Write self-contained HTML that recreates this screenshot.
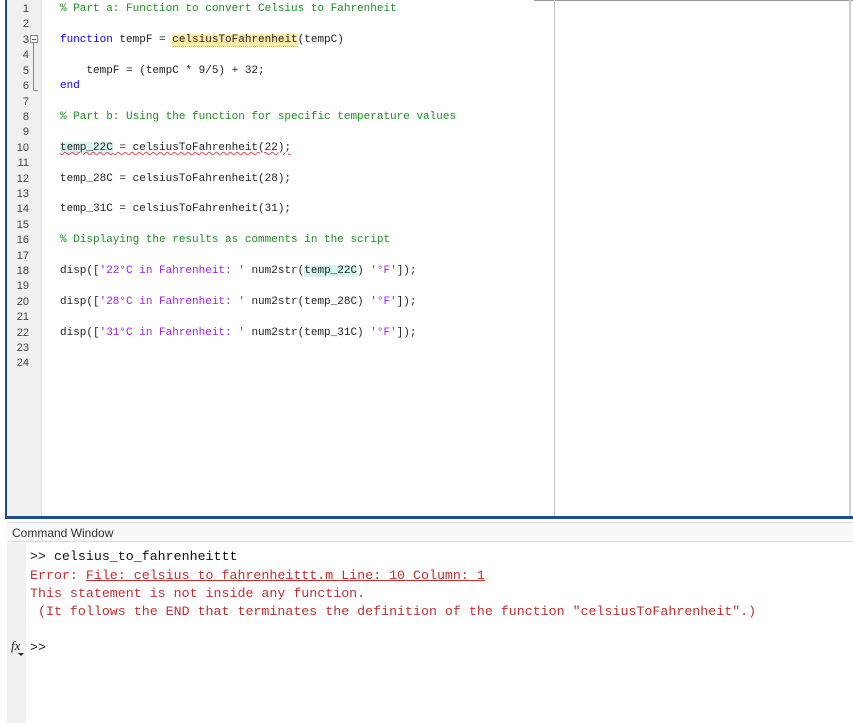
<!DOCTYPE html>
<html><head><style>
body{margin:0;width:853px;height:723px;background:#fff;position:relative;overflow:hidden;font-family:"Liberation Sans",sans-serif}
.ed{position:absolute;left:5px;top:0;width:848px;height:516px;border-left:2px solid #1a4e8c;border-bottom:3px solid #1a4e8c;box-sizing:content-box}
.gut{position:absolute;left:7px;top:0;width:34px;height:516px;background:#f0f0f0;border-right:1px solid #e2e2e2}
.ln{position:absolute;left:7px;width:22px;text-align:right;font:11px "Liberation Sans",sans-serif;color:#444;margin-top:2px}
.code{position:absolute;left:60px;font:11px "Liberation Mono",monospace;color:#222;white-space:pre;margin-top:2px}
.c{color:#228b22}.k{color:#0e00ff}.s{color:#a020f0}
.vl{position:absolute;left:554px;top:0;width:1px;height:516px;background:#c0c0c0}
.sb{position:absolute;left:849px;top:0;width:2px;height:516px;background:#d0d0d0}
.tl{position:absolute;left:534px;top:0;width:319px;height:1px;background:#999}
.hdr{position:absolute;left:7px;top:522px;width:846px;height:20px;background:#f8f8f8;border-top:1px solid #d8d8d8;border-bottom:1px solid #d8d8d8;font-size:12px;color:#333;line-height:20px;padding-left:5px;box-sizing:border-box}
.cg{position:absolute;left:7px;top:543px;width:19px;height:180px;background:#f0f0f0}
.cl{position:absolute;left:30px;font:13.3px "Liberation Mono",monospace;white-space:pre;color:#111}
.r{color:#c0302c}
</style></head><body>
<div class="gut"></div>
<div class="ed"></div>
<div class="tl"></div>
<div class="vl"></div>
<div class="sb"></div>
<div style="position:absolute;left:30px;top:35px;width:8px;height:8px;border:1px solid #888;background:#fff;box-sizing:border-box"></div>
<div style="position:absolute;left:32px;top:39px;width:4px;height:1px;background:#555"></div>
<div style="position:absolute;left:33px;top:43px;width:1px;height:47px;background:#888"></div>
<div style="position:absolute;left:33px;top:90px;width:5px;height:1px;background:#888"></div>
<div class="ln" style="top:1px">1</div><div class="ln" style="top:16px">2</div><div class="ln" style="top:32px">3</div><div class="ln" style="top:47px">4</div><div class="ln" style="top:63px">5</div><div class="ln" style="top:78px">6</div><div class="ln" style="top:94px">7</div><div class="ln" style="top:109px">8</div><div class="ln" style="top:124px">9</div><div class="ln" style="top:140px">10</div><div class="ln" style="top:155px">11</div><div class="ln" style="top:171px">12</div><div class="ln" style="top:186px">13</div><div class="ln" style="top:201px">14</div><div class="ln" style="top:217px">15</div><div class="ln" style="top:232px">16</div><div class="ln" style="top:248px">17</div><div class="ln" style="top:263px">18</div><div class="ln" style="top:278px">19</div><div class="ln" style="top:294px">20</div><div class="ln" style="top:309px">21</div><div class="ln" style="top:325px">22</div><div class="ln" style="top:340px">23</div><div class="ln" style="top:355px">24</div>
<div class="code c" style="top:1px">% Part a: Function to convert Celsius to Fahrenheit</div>
<div class="code" style="top:32px"><span class="k">function</span> tempF = <span style="background:#fbeaa8;border-bottom:1px dotted #e0b040">celsiusToFahrenheit</span>(tempC)</div>
<div class="code" style="top:63px">    tempF = (tempC * 9/5) + 32;</div>
<div class="code k" style="top:78px">end</div>
<div class="code c" style="top:109px">% Part b: Using the function for specific temperature values</div>
<div class="code" style="top:140px;text-decoration:underline wavy #e05050;text-decoration-thickness:1px"><span style="background:#d6f5ef">temp_22C</span> = celsiusToFahrenheit(22);</div>
<div class="code" style="top:171px">temp_28C = celsiusToFahrenheit(28);</div>
<div class="code" style="top:201px">temp_31C = celsiusToFahrenheit(31);</div>
<div class="code c" style="top:232px">% Displaying the results as comments in the script</div>
<div class="code" style="top:263px">disp([<span class="s">'22°C in Fahrenheit: '</span> num2str(<span style="background:#d6f5ef">temp_22C</span>) <span class="s">'°F'</span>]);</div>
<div class="code" style="top:294px">disp([<span class="s">'28°C in Fahrenheit: '</span> num2str(temp_28C) <span class="s">'°F'</span>]);</div>
<div class="code" style="top:325px">disp([<span class="s">'31°C in Fahrenheit: '</span> num2str(temp_31C) <span class="s">'°F'</span>]);</div>
<div class="hdr">Command Window</div>
<div class="cg"></div>
<div class="cl" style="top:549px">&gt;&gt; celsius_to_fahrenheittt</div>
<div class="cl r" style="top:568px">Error: <span style="text-decoration:underline">File: celsius_to_fahrenheittt.m Line: 10 Column: 1</span></div>
<div class="cl r" style="top:586px">This statement is not inside any function.</div>
<div class="cl r" style="top:604px"> (It follows the END that terminates the definition of the function "celsiusToFahrenheit".)</div>
<div class="cl" style="top:640px">&gt;&gt;</div>
<div style="position:absolute;left:11px;top:638px;font:italic 13px 'Liberation Serif',serif;color:#222">fx</div>
<div style="position:absolute;left:18px;top:653px;width:0;height:0;border-left:3px solid transparent;border-right:3px solid transparent;border-top:3px solid #222"></div>
</body></html>
